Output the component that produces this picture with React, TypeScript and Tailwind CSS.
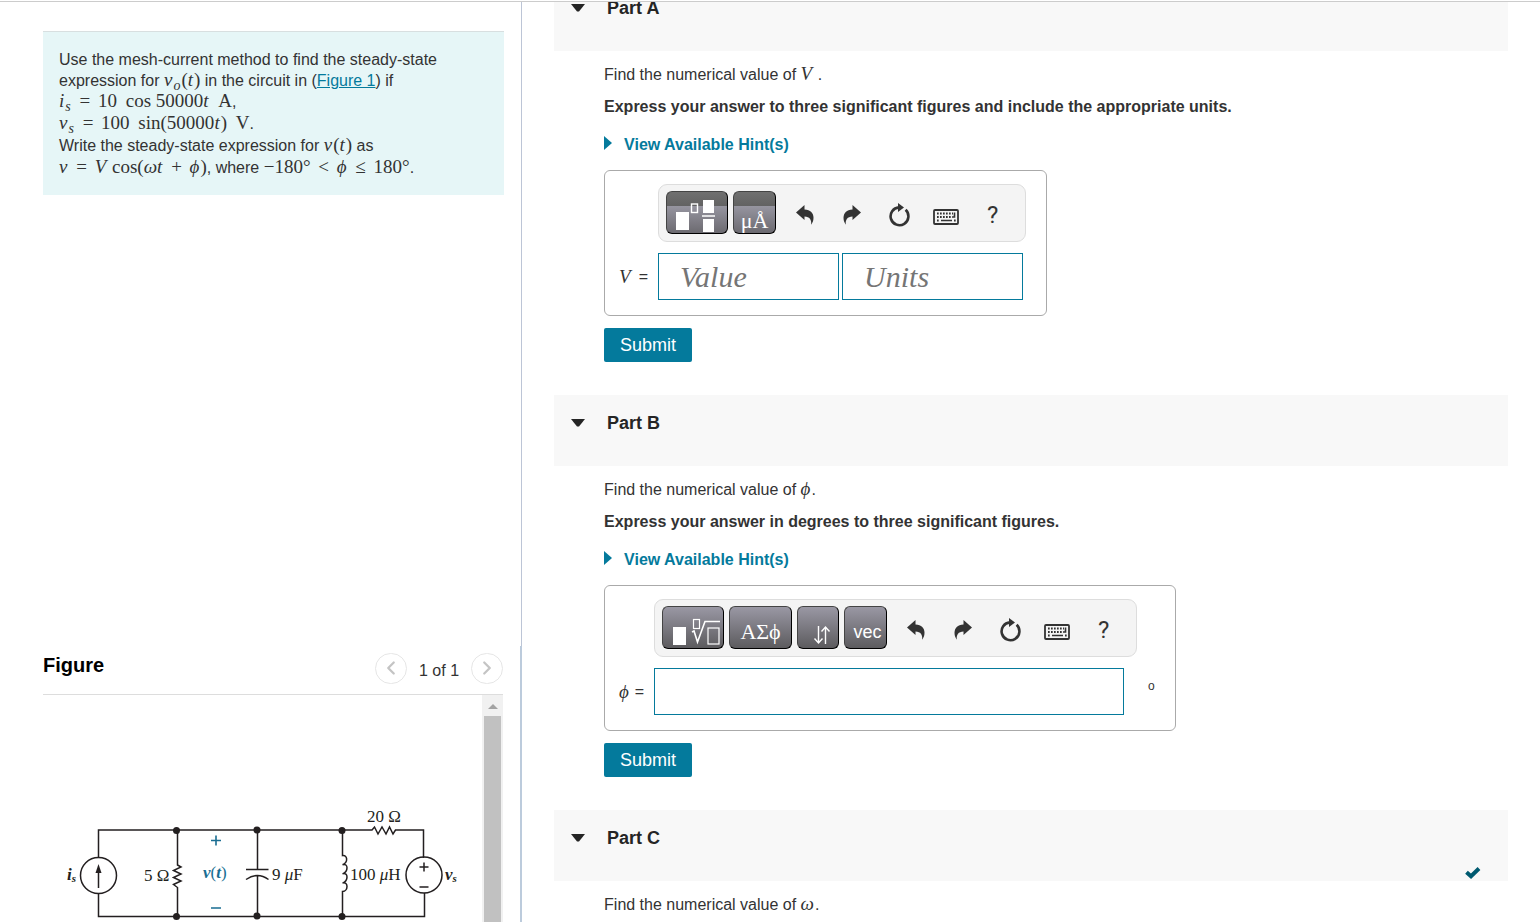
import React from 'react'
import { ChevronLeft, ChevronRight } from 'lucide-react'

const M: React.FC<{ children: React.ReactNode }> = ({ children }) => (
  <span className="font-['Liberation_Serif','Times_New_Roman',serif] text-[19px] leading-none whitespace-nowrap [&>i]:mr-px">
    {children}
  </span>
)

const Sub: React.FC<{ children: React.ReactNode }> = ({ children }) => (
  <sub className="mr-px text-[14px] italic">{children}</sub>
)

const Op: React.FC<{ children: React.ReactNode }> = ({ children }) => <span className="mx-[3px]">{children}</span>

const UndoIcon: React.FC<{ flip?: boolean }> = ({ flip }) => (
  <svg width="18" height="20" viewBox="0 0 18 20" className={flip ? '-scale-x-100' : ''} aria-hidden="true">
    <path d="M0 7.500 8.500 0v4.400c6 .4 9 3.600 9 8.400 0 2.600-.8 4.900-2.300 6.900.4-5.200-1.500-7.900-6.700-8.200V15Z" fill="#333" />
  </svg>
)

const ResetIcon = () => (
  <svg width="22" height="24" viewBox="0 0 22 24" aria-hidden="true">
    <path d="M17.600 6.800A8.900 8.900 0 1 1 11 4.400" fill="none" stroke="#333" strokeWidth="2.600" />
    <path d="m10 0 6 4.600-6 4.400Z" fill="#333" />
  </svg>
)

const KeyboardIcon = () => (
  <svg width="26" height="16" viewBox="0 0 26 16" aria-hidden="true">
    <rect x="1" y="1" width="24" height="14" rx="1" fill="none" stroke="#333" strokeWidth="1.800" />
    <path d="M4 4.500h16M4 8h15M4 11.500h2M21 11.500h2" stroke="#333" strokeWidth="1.800" strokeDasharray="1.700 1.300" />
    <path d="M8 11.500h11M21.500 3.500v5.300M19 8h3" stroke="#333" strokeWidth="1.600" />
  </svg>
)

const FractionTemplate = () => (
  <svg width="60" height="41" viewBox="0 0 60 41" aria-hidden="true">
    <rect x="9" y="20" width="13" height="18" fill="#fff" />
    <rect x="24.500" y="12" width="6" height="8.500" fill="none" stroke="#fff" strokeWidth="1.400" />
    <rect x="36" y="8" width="11" height="13" fill="#fff" />
    <path d="M35 24h13" stroke="#fff" strokeWidth="1.500" />
    <rect x="36" y="27" width="11" height="13" fill="#fff" />
  </svg>
)

const RootTemplate = () => (
  <svg width="60" height="40" viewBox="0 0 60 40" aria-hidden="true">
    <rect x="10" y="19" width="13" height="18" fill="#fff" />
    <rect x="30.500" y="11.500" width="6" height="9" fill="none" stroke="#fff" strokeWidth="1.200" />
    <path d="m29 24 2-1 3.500 11L42 13.500h15" fill="none" stroke="#fff" strokeWidth="1.600" />
    <rect x="45" y="20" width="11" height="16" fill="none" stroke="#fff" strokeWidth="1.200" />
  </svg>
)

const ArrowsIcon = () => (
  <svg width="40" height="40" viewBox="0 0 40 40" aria-hidden="true">
    <path d="M20.500 18v17M16.500 30.500l4 4.500 4-4.500M27.500 36V19M23.500 23.500l4-4.500 4 4.500" fill="none" stroke="#fff" strokeWidth="1.400" />
  </svg>
)

const toolKey = 'h-[43px] overflow-hidden rounded-[6px] border border-[#444] border-r-black border-b-black text-white'
const unitKey = 'bg-[linear-gradient(#707070_0,#626262_14px,#9695a0_14px,#6c6a70_100%)]'
const mathKey = 'bg-[linear-gradient(#9a98a4,#5c5b5e)]'

const EditTools = () => (
  <div className="ml-[5px] flex pt-[2px] *:flex *:h-[43px] *:w-[47px] *:items-center *:justify-center">
    <button type="button" aria-label="undo"><UndoIcon /></button>
    <button type="button" aria-label="redo"><UndoIcon flip /></button>
    <button type="button" aria-label="reset"><ResetIcon /></button>
    <button type="button" aria-label="keyboard shortcuts" className="pt-1"><KeyboardIcon /></button>
    <button type="button" aria-label="help" className="font-[Roboto,sans-serif] text-2xl text-[#333]">?</button>
  </div>
)

const Toolbar: React.FC<{ children: React.ReactNode }> = ({ children }) => (
  <div className="flex h-[58px] w-fit rounded-[9px] border border-[#ddd] bg-[#f4f4f4] py-[6px] pr-[9px] pl-[7px]">
    <div className="flex gap-[5px]">{children}</div>
    <EditTools />
  </div>
)

const SubmitButton = () => (
  <button type="button" className="mt-3 h-[34px] rounded-[2px] bg-[#047a9c] px-4 text-lg leading-none text-white">
    Submit
  </button>
)

const Hints = () => (
  <a href="#hints" className="mt-[14px] flex w-fit items-center gap-3 leading-6 font-bold text-[#047a9c]">
    <svg width="8" height="14" viewBox="0 0 8 14" className="mb-[5px]" aria-hidden="true">
      <path d="M0 0v14l8-7Z" fill="#047a9c" />
    </svg>
    View Available Hint(s)
  </a>
)

interface PartProps {
  title: string
  done?: boolean
  children: React.ReactNode
}

const Part: React.FC<PartProps> = ({ title, done, children }) => (
  <section>
    <h2 className="flex h-[71px] justify-between bg-[#f8f8f8]">
      <button type="button" className="flex items-center gap-[22px] self-start pt-4 pl-[17px] text-lg leading-6 font-bold text-[#252525]">
        <svg width="14" height="8" viewBox="0 0 14 8" aria-hidden="true">
          <path d="M0 0h14L8 7.500H6Z" fill="#252525" />
        </svg>
        {title}
      </button>
      {done && (
        <svg width="16" height="12" viewBox="0 0 16 12" className="mr-[27px] mb-[2px] self-end" role="img" aria-label="Completed">
          <path d="m1.500 5.200 4.500 4 8-7.700" fill="none" stroke="#005a70" strokeWidth="4" />
        </svg>
      )}
    </h2>
    <div className="pt-3 pb-[33px] pl-[50px]">{children}</div>
  </section>
)

const circuitText = "font-['Liberation_Serif','Times_New_Roman',serif] text-[17px]"

const Circuit = () => (
  <svg width="439" height="227" viewBox="43 695 439 227" role="img" aria-label="Circuit diagram">
    <g fill="none" stroke="#231f20" strokeWidth="1.500">
      <path d="M98.500 858v-28H372l2.500-3 3.500 7 4-7 4 7 3.500-7 3.500 7 2.500-4h28V858M98.500 893v23.500h326V893" />
      <path d="M177.500 830v35l3.500 2-7.500 3.500 7.500 3.500-7.500 3.500 7.500 3.500-7.500 3.500 4 3v29" />
      <path d="M257.500 830v39.500M246 869.500h22.500M246 879.500q11.500-8 22.500 0M257.500 876v40" />
      <path d="M342.500 830v25.500c5-1 6 7 0 9.200 6-2 6 7 0 9.200 6-2 6 7 0 9.200 6-2 6 8 0 8.400v25" />
      <circle cx="98.500" cy="875.500" r="18" />
      <circle cx="424" cy="875" r="18" />
      <path d="M98.500 888v-18M419.500 867h9M424 862.500v9M419.500 887h9" />
    </g>
    <path d="m98.500 864 3 9h-6Z" fill="#231f20" />
    <g fill="#231f20">
      <circle cx="176.500" cy="830.500" r="3.500" />
      <circle cx="257" cy="830" r="3.500" />
      <circle cx="342" cy="830.500" r="3.500" />
      <circle cx="176.500" cy="916.500" r="3.500" />
      <circle cx="257" cy="916" r="3.500" />
      <circle cx="342" cy="916.500" r="3.500" />
    </g>
    <path d="M211 840.500h10M216 835.500v10M211 908h10" stroke="#1a6e92" strokeWidth="1.600" />
    <g className={circuitText} fill="#231f20">
      <text x="67" y="880" fontStyle="italic" fontWeight="bold">i<tspan fontSize="11" dy="2">s</tspan></text>
      <text x="144" y="881">5 Ω</text>
      <text x="272" y="880">9 <tspan fontStyle="italic">μ</tspan>F</text>
      <text x="350" y="880">100 <tspan fontStyle="italic">μ</tspan>H</text>
      <text x="367" y="822">20 Ω</text>
      <text x="445" y="880" fontStyle="italic" fontWeight="bold">v<tspan fontSize="11" dy="2">s</tspan></text>
      <text x="203" y="878" fill="#1a6e92">
        <tspan fontStyle="italic" fontWeight="bold">v</tspan>(<tspan fontStyle="italic" fontWeight="bold">t</tspan>)
      </text>
    </g>
  </svg>
)

const pagerButton = 'flex h-[31px] w-[32px] items-center justify-center rounded-full border border-[#e6e6e6] text-[#c4c4c4]'

const FigurePanel = () => (
  <section className="flex h-[30%] shrink-0 flex-col border-r-2 border-[#bccbdc] pr-[17px] pl-[43px]">
    <div className="flex h-[49px] shrink-0 items-center justify-between border-b border-[#ddd] pb-1">
      <h2 className="pb-[6px] text-xl font-bold text-black">Figure</h2>
      <div className="flex items-center gap-3">
        <button type="button" aria-label="Previous figure" className={pagerButton}><ChevronLeft size={22} strokeWidth={2.5} /></button>
        <span className="pt-[6px]">1 of 1</span>
        <button type="button" aria-label="Next figure" className={pagerButton}><ChevronRight size={22} strokeWidth={2.5} /></button>
      </div>
    </div>
    <div className="flex min-h-0 flex-1 justify-between overflow-hidden">
      <Circuit />
      <div className="flex w-[21px] shrink-0 flex-col items-center bg-[#f1f1f1]">
        <svg width="10" height="21" viewBox="0 0 10 21" className="shrink-0" aria-hidden="true">
          <path d="M0 14h10L5 9Z" fill="#a3a3a3" />
        </svg>
        <div className="w-[17px] flex-1 bg-[#c1c1c1]" />
      </div>
    </div>
  </section>
)

const answerBox = 'mt-[13px] grid w-fit gap-y-[11px] rounded-[6px] border border-[#aaa] pt-[13px] pr-5 pb-[15px] pl-[14px]'
const answerLabel = 'flex items-center justify-between pr-[10px]'
const answerInput = "h-[47px] border border-[#047a9c] bg-white px-[21px] font-['Liberation_Serif','Times_New_Roman',serif] text-3xl italic outline-none placeholder:text-[#757575]"

export default function App() {
  return (
    <div className="flex h-screen flex-col overflow-hidden bg-white pt-px font-['Liberation_Sans',Arial,sans-serif] text-base text-[#333]">
      <div className="flex min-h-0 flex-1 border-t border-[#ccc]">
        <aside className="flex w-[33.9%] shrink-0 flex-col">
          <div className="min-h-0 flex-1 overflow-hidden border-r border-[#bcc5d6] pt-[29px] pr-[17px] pl-[43px]">
            <div className="border-t border-[#d8dfe0] bg-[#e6f6f7] px-4 pt-[18px] pb-4">
              <p className="leading-5">
                Use the mesh-current method to find the steady-state expression for{' '}
                <M><i>v</i><Sub>o</Sub>(<i>t</i>)</M> in the circuit in (
                <a href="#figure" className="text-[#047a9c] underline">Figure 1</a>) if
              </p>
              <p className="leading-[22px]">
                <M><i>i</i><Sub>s</Sub> <Op>=</Op> 10 <span className="ml-1">cos</span> 50000<i>t</i> <span className="ml-1">A</span></M>,
                <br />
                <M><i>v</i><Sub>s</Sub> <Op>=</Op> 100 <span className="ml-1">sin</span>(50000<i>t</i>) <span className="ml-1">V</span></M>.
                <br />
                Write the steady-state expression for <M><i>v</i>(<i>t</i>)</M> as
                <br />
                <M><i>v</i> <Op>=</Op> <i>V</i> cos(<i>ωt</i> <Op>+</Op> <i>ϕ</i>)</M>, where{' '}
                <M>−180° <Op>&lt;</Op> <i>ϕ</i> <Op>≤</Op> 180°</M>.
              </p>
            </div>
          </div>
          <FigurePanel />
        </aside>

        <main className="min-w-0 flex-1 overflow-hidden px-8">
          {/* first part sits partly above the fold of the scroll area */}
          <div className="-mt-[22px]">
            <Part title="Part A">
              <p className="leading-6">Find the numerical value of <M><i>V</i></M> .</p>
              <p className="mt-2 leading-6 font-bold">
                Express your answer to three significant figures and include the appropriate units.
              </p>
              <Hints />
              <div className={`${answerBox} grid-cols-[39px_auto]`}>
                <div className="col-start-2">
                  <Toolbar>
                    <button type="button" aria-label="templates" className={`${toolKey} ${unitKey} w-[62px]`}>
                      <FractionTemplate />
                    </button>
                    <button type="button" aria-label="units" className={`${toolKey} ${unitKey} w-[43px] pt-4 font-['Liberation_Serif',serif] text-[22px] leading-none`}>
                      μÅ
                    </button>
                  </Toolbar>
                </div>
                <label htmlFor="value" className={answerLabel}><M><i>V</i></M> =</label>
                <div className="flex gap-[3px]">
                  <input id="value" placeholder="Value" className={`${answerInput} w-[181px]`} />
                  <input aria-label="Units" placeholder="Units" className={`${answerInput} w-[181px]`} />
                </div>
              </div>
              <SubmitButton />
            </Part>

            <Part title="Part B">
              <p className="leading-6">Find the numerical value of <M><i>ϕ</i></M>.</p>
              <p className="mt-2 leading-6 font-bold">Express your answer in degrees to three significant figures.</p>
              <Hints />
              <div className={`${answerBox} grid-cols-[35px_auto]`}>
                <div className="col-start-2">
                  <Toolbar>
                    <button type="button" aria-label="templates" className={`${toolKey} ${mathKey} w-[62px]`}>
                      <RootTemplate />
                    </button>
                    <button type="button" aria-label="symbols" className={`${toolKey} ${mathKey} w-[63px] pt-2 font-['Liberation_Serif',serif] text-[22px]`}>
                      ΑΣϕ
                    </button>
                    <button type="button" aria-label="relations" className={`${toolKey} ${mathKey} w-[42px]`}>
                      <ArrowsIcon />
                    </button>
                    <button type="button" className={`${toolKey} ${mathKey} w-[43px] pt-2 pl-1 text-lg`}>
                      vec
                    </button>
                  </Toolbar>
                </div>
                <label htmlFor="phi" className={answerLabel}><M><i>ϕ</i></M> =</label>
                <div className="flex items-center">
                  <input id="phi" className={`${answerInput} w-[470px]`} />
                  <span className="ml-[24px] pb-3 text-xs">o</span>
                </div>
              </div>
              <SubmitButton />
            </Part>

            <Part title="Part C" done>
              <p className="leading-6">Find the numerical value of <M><i>ω</i></M>.</p>
            </Part>
          </div>
        </main>
      </div>
    </div>
  )
}
